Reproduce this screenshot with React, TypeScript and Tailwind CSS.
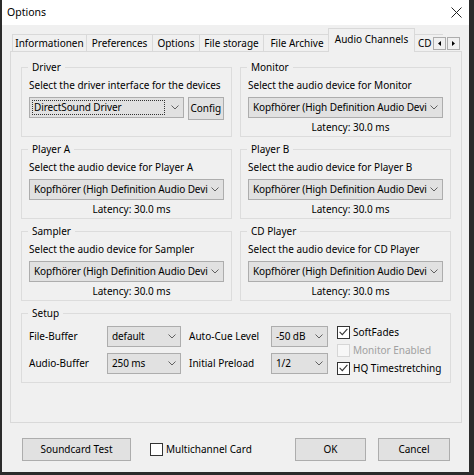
import React from 'react';

const DEVICE = 'Kopfhörer (High Definition Audio Device)';

function Chevron() {
  return (
    <svg width="8" height="5" viewBox="0 0 8 5" className="shrink-0">
      <path d="M0.5 0.5 L4 4 L7.5 0.5" fill="none" stroke="#606060" strokeWidth="1" />
    </svg>
  );
}

function Combo({ text, className = '', focused = false }: { text: string; className?: string; focused?: boolean }) {
  return (
    <div className={`h-[21px] border border-[#adadad] bg-[#e1e1e1] flex items-center pl-[2px] pr-[4px] ${className}`}>
      <div
        className={`flex-1 min-w-0 h-[15px] flex items-center pl-[1px] mr-[2px] overflow-hidden whitespace-nowrap tracking-[-0.1px] border border-dotted ${
          focused ? 'border-[#333333] mr-[6px]' : 'border-transparent'
        }`}
      >
        {text}
      </div>
      <Chevron />
    </div>
  );
}

function Group({ title, children, className = '' }: { title: string; children: React.ReactNode; className?: string }) {
  return (
    <fieldset className={`border border-[#dcdcdc] px-[7px] min-w-0 ${className}`}>
      <legend className="-ml-[1px] px-[4px] leading-[14px]">{title}</legend>
      {children}
    </fieldset>
  );
}

function DeviceGroup({ name }: { name: string }) {
  return (
    <Group title={name} className="h-[77px]">
      <div className="mt-[4px] leading-[15px] whitespace-nowrap">Select the audio device for {name}</div>
      <Combo text={DEVICE} className="mt-[4px]" />
      <div className="mt-[2px] leading-[15px] text-center pl-[10px]">Latency: 30.0 ms</div>
    </Group>
  );
}

function Check({ label, checked = false, disabled = false }: { label: string; checked?: boolean; disabled?: boolean }) {
  return (
    <div className="flex items-center h-[18px] whitespace-nowrap">
      <span
        className={`w-[13px] h-[13px] border flex items-center justify-center ${
          disabled ? 'border-[#d6d6d6] bg-[#f7f7f7]' : 'border-[#333333] bg-white'
        }`}
      >
        {checked && (
          <svg width="9" height="8" viewBox="0 0 9 8">
            <path d="M0.6 3.9 L3.3 6.7 L8.4 0.8" fill="none" stroke="#333333" strokeWidth="1.1" />
          </svg>
        )}
      </span>
      <span className={`ml-[3px] ${disabled ? 'text-[#a0a0a0]' : ''}`}>{label}</span>
    </div>
  );
}

function Button({ label, className = '' }: { label: string; className?: string }) {
  return (
    <div className={`h-[23px] border border-[#adadad] bg-[#e1e1e1] flex items-center justify-center ${className}`}>
      {label}
    </div>
  );
}

const TABS = [
  { label: 'Informationen', w: 'w-[74px]' },
  { label: 'Preferences', w: 'w-[66px]' },
  { label: 'Options', w: 'w-[47px]' },
  { label: 'File storage', w: 'w-[64px]' },
  { label: 'File Archive', w: 'w-[67px]' },
];

export default function App() {
  return (
    <div className="w-[474px] h-[475px] bg-[#2b2b2b] font-['Noto_Sans',sans-serif] text-[10px] text-black">
      <div className="ml-[2px] w-[467px] h-[472px] bg-[#f0f0f0] flex flex-col">
        {/* title bar */}
        <div className="h-[25px] shrink-0 bg-white flex items-center justify-between pl-[5px] pr-[7px]">
          <span className="text-[10.5px]">Options</span>
          <svg width="11" height="11" viewBox="0 0 11 11">
            <path d="M0.5 0.5 L10.5 10.5 M10.5 0.5 L0.5 10.5" stroke="#222222" strokeWidth="1" />
          </svg>
        </div>

        {/* tab strip */}
        <div className="relative mt-[3px] ml-[10px] w-[448px] h-[23px] flex items-end">
          {TABS.map((t) => (
            <div
              key={t.label}
              className={`${t.w} h-[17px] shrink-0 border-l border-t border-[#d9d9d9] flex items-center justify-center whitespace-nowrap`}
            >
              {t.label}
            </div>
          ))}
          <div className="relative z-10 -ml-[2px] -mr-[2px] -mb-px w-[87px] h-[24px] shrink-0 border border-b-0 border-[#d9d9d9] bg-[#f0f0f0] flex items-start justify-center pt-[3px] whitespace-nowrap">
            Audio Channels
          </div>
          <div className="w-[30px] h-[17px] shrink-0 border-t border-[#d9d9d9] pl-[5px] flex items-center overflow-hidden whitespace-nowrap">
            CD Player
          </div>
          {/* scroll arrows */}
          <div className="absolute right-0 top-[9px] flex gap-px">
            <div className="w-[13px] h-[13px] border border-[#adadad] bg-[#f0f0f0] flex items-center justify-center">
              <svg width="3" height="5" viewBox="0 0 3 5"><path d="M3 0 L0 2.5 L3 5 Z" fill="#000" /></svg>
            </div>
            <div className="w-[13px] h-[13px] border border-[#adadad] bg-[#f0f0f0] flex items-center justify-center">
              <svg width="3" height="5" viewBox="0 0 3 5"><path d="M0 0 L3 2.5 L0 5 Z" fill="#000" /></svg>
            </div>
          </div>
        </div>

        {/* tab page */}
        <div className="ml-[8px] w-[452px] h-[372px] shrink-0 border border-[#d9d9d9] bg-[#f0f0f0] px-[10px] pt-[8px]">
          <div className="grid grid-cols-2 gap-x-[8px] gap-y-[5px]">
            <Group title="Driver" className="h-[77px]">
              <div className="mt-[4px] leading-[15px] whitespace-nowrap">Select the driver interface for the devices</div>
              <div className="mt-[4px] flex gap-[4px]">
                <Combo text="DirectSound Driver" focused className="w-[157px]" />
                <Button label="Config" className="w-[37px] h-[21px]" />
              </div>
            </Group>
            <DeviceGroup name="Monitor" />
            <DeviceGroup name="Player A" />
            <DeviceGroup name="Player B" />
            <DeviceGroup name="Sampler" />
            <DeviceGroup name="CD Player" />
            <Group title="Setup" className="col-span-2 h-[77px]">
              <div className="flex">
                <div className="mt-[6px] grid grid-cols-[78px_74px_8px_82px_57px] gap-y-[6px] auto-rows-[21px] items-center">
                  <span>File-Buffer</span>
                  <Combo text="default" />
                  <span />
                  <span>Auto-Cue Level</span>
                  <Combo text="-50 dB" />
                  <span>Audio-Buffer</span>
                  <Combo text="250 ms" />
                  <span />
                  <span>Initial Preload</span>
                  <Combo text="1/2" />
                </div>
                <div className="ml-[9px] mt-[3px] flex flex-col">
                  <Check label="SoftFades" checked />
                  <Check label="Monitor Enabled" disabled />
                  <Check label="HQ Timestretching" checked />
                </div>
              </div>
            </Group>
          </div>
        </div>

        {/* dialog buttons */}
        <div className="mt-[15px] pl-[20px] pr-[19px] flex items-center">
          <Button label="Soundcard Test" className="w-[109px]" />
          <div className="ml-[19px]">
            <Check label="Multichannel Card" />
          </div>
          <Button label="OK" className="ml-auto w-[71px] border-[#0078d7]" />
          <Button label="Cancel" className="ml-[12px] w-[72px]" />
        </div>
      </div>
    </div>
  );
}
